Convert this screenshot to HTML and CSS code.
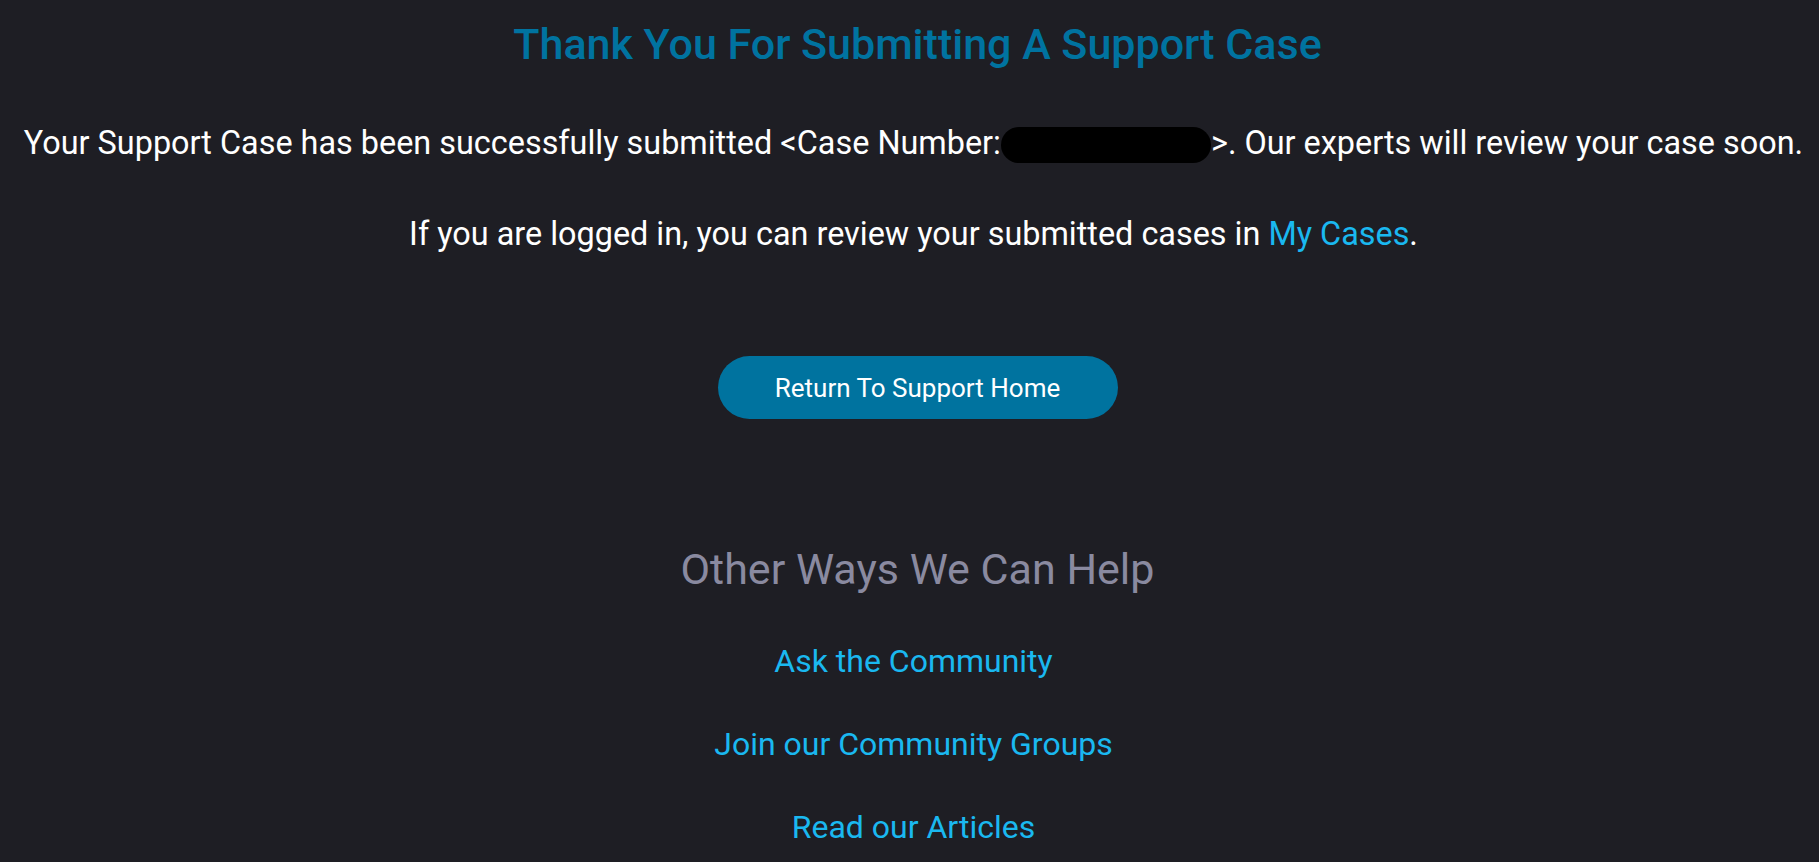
FILE: index.html
```html
<!DOCTYPE html>
<html lang="en">
<head>
<meta charset="utf-8">
<title>Thank You For Submitting A Support Case</title>
<link rel="stylesheet" href="styles.css">
</head>
<body>
<main class="page">
  <h1 class="title shifted">Thank You For Submitting A Support Case</h1>
  <p class="msg">Your Support Case has been successfully submitted &lt;Case Number:<span class="redact"></span>&gt;. Our experts will review your case soon.</p>
  <p class="msg msg-second">If you are logged in, you can review your submitted cases in <a class="link" href="#">My Cases</a>.</p>
  <div class="actions shifted"><a class="btn" href="#">Return To Support Home</a></div>
  <h2 class="other shifted">Other Ways We Can Help</h2>
  <ul class="ways">
    <li><a class="link" href="#">Ask the Community</a></li>
    <li><a class="link" href="#">Join our Community Groups</a></li>
    <li><a class="link" href="#">Read our Articles</a></li>
  </ul>
</main>
</body>
</html>
```

FILE: styles.css
```css
html, body {
  margin: 0;
  padding: 0;
  background: #1e1e24;
  height: 100%;
}
body {
  font-family: Roboto, "Liberation Sans", sans-serif;
  color: #ffffff;
  overflow: hidden;
}
.page {
  display: flex;
  flex-direction: column;
  align-items: center;
  text-align: center;
  padding-left: 8px;
}
.shifted {
  padding-left: 8px;
}
.title {
  margin: 18px 0 0;
  font-size: 43px;
  font-weight: 500;
  line-height: 52px;
  color: #0073a0;
}
.msg {
  margin: 53px 0 0;
  font-size: 32.4px;
  line-height: 40px;
  white-space: nowrap;
}
.msg-second {
  margin-top: 51px;
}
.redact {
  display: inline-block;
  width: 210px;
  height: 36px;
  background: #000;
  border-radius: 18px;
  vertical-align: -9px;
}
.link {
  color: #1ab8f0;
  text-decoration: none;
}
.actions {
  margin-top: 102px;
}
.btn {
  display: inline-flex;
  align-items: center;
  justify-content: center;
  width: 400px;
  height: 63px;
  border-radius: 32px;
  background: #00739f;
  color: #fff;
  font-size: 26px;
  text-decoration: none;
}
.other {
  margin: 125px 0 0;
  font-size: 43px;
  font-weight: 400;
  line-height: 50px;
  color: #8a8aa0;
}
.ways {
  list-style: none;
  margin: 48px 0 0;
  padding: 0;
  display: flex;
  flex-direction: column;
  align-items: center;
  gap: 45px;
  font-size: 32px;
  line-height: 38px;
}
```
